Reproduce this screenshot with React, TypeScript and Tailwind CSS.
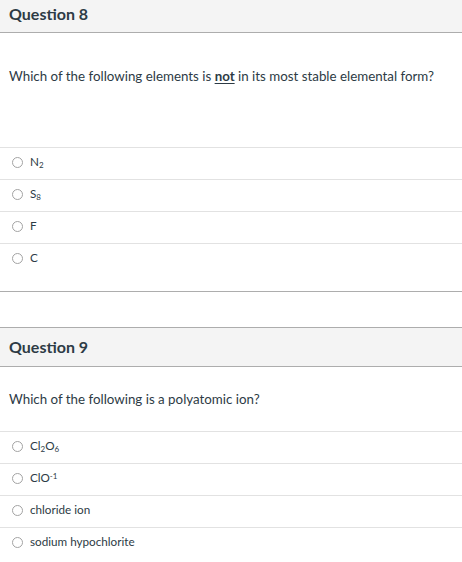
import React from "react";

const Radio = () => (
  <span className="inline-block w-[11px] h-[11px] rounded-full border border-[#a3a3a3] bg-white shrink-0 relative -top-[1px]" />
);

const Row = ({ children }: { children: React.ReactNode }) => (
  <div className="h-[32px] border-t border-[#e2e2e2] flex items-center pl-[12px] gap-[7px] text-[11.7px] text-[#2d3b45]">
    <Radio />
    <span className="leading-none relative -top-[2px]">{children}</span>
  </div>
);

const Sub = ({ children }: { children: React.ReactNode }) => (
  <sub className="text-[8px] relative top-[2px] align-baseline">{children}</sub>
);

export default function App() {
  return (
    <div
      className="w-[462px] h-[562px] bg-white overflow-hidden"
      style={{ fontFamily: "Lato, 'Open Sans', sans-serif" }}
    >
      {/* Question 8 */}
      <div className="border-b border-[#adadad] pb-[16px]">
        <div className="h-[33px] bg-[#f4f4f4] border-b border-[#adadad] flex items-center pl-[9px] pb-[5px]">
          <span className="text-[16px] font-bold text-[#2d3b45]">Question 8</span>
        </div>
        <div className="pt-[33px] pb-[61px] pl-[9px] text-[13.33px] leading-[20px] text-[#2d3b45]">
          Which of the following elements is{" "}
          <span className="font-bold underline underline-offset-2">not</span> in its most stable
          elemental form?
        </div>
        <div>
          <Row>
            N<Sub>2</Sub>
          </Row>
          <Row>
            S<Sub>8</Sub>
          </Row>
          <Row>F</Row>
          <Row>C</Row>
        </div>
      </div>

      <div className="h-[35px]" />

      {/* Question 9 */}
      <div className="border-t border-[#adadad]">
        <div className="h-[39px] bg-[#f4f4f4] border-b border-[#adadad] flex items-center pl-[9px]">
          <span className="text-[16px] font-bold text-[#2d3b45]">Question 9</span>
        </div>
        <div className="pt-[22px] pb-[22px] pl-[9px] text-[13.33px] leading-[20px] text-[#2d3b45]">
          Which of the following is a polyatomic ion?
        </div>
        <div>
          <Row>
            Cl<Sub>2</Sub>O<Sub>6</Sub>
          </Row>
          <Row>
            ClO<sup className="text-[8px] relative -top-[3px] align-baseline">-1</sup>
          </Row>
          <Row>chloride ion</Row>
          <Row>sodium hypochlorite</Row>
        </div>
      </div>
    </div>
  );
}
